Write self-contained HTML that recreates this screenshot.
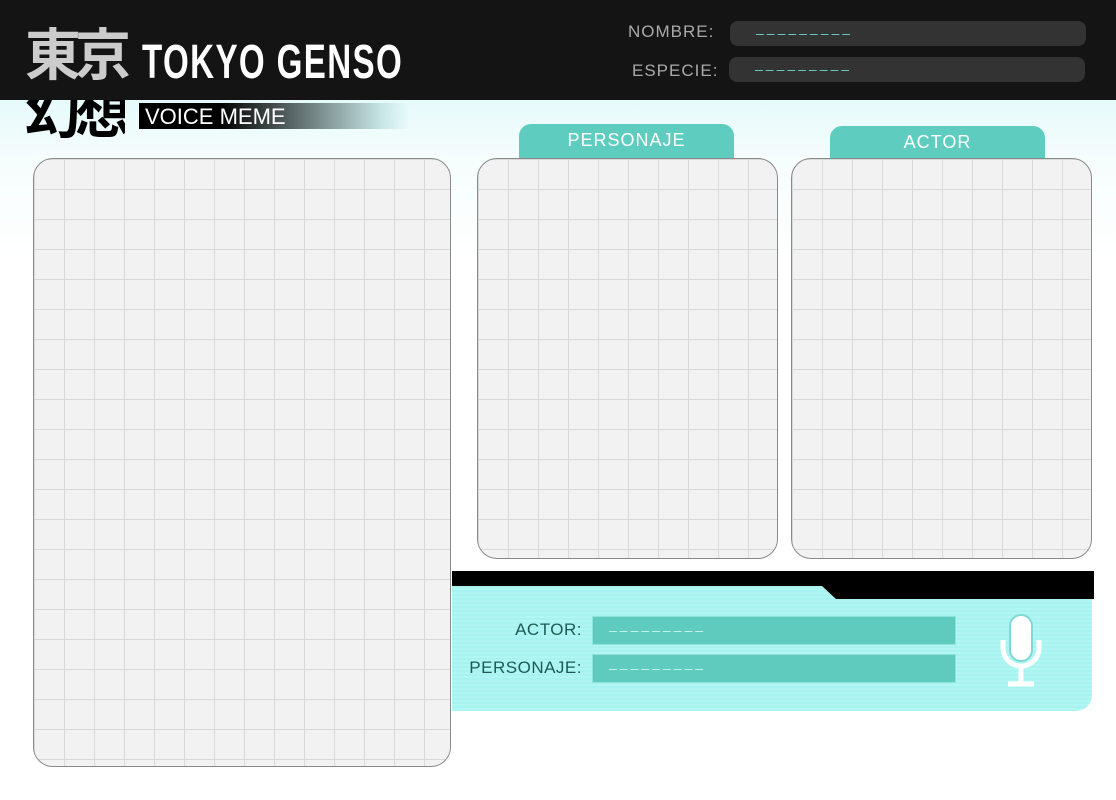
<!DOCTYPE html><html><head><style>
body{margin:0;width:1116px;height:800px;position:relative;overflow:hidden;background:linear-gradient(#e6fafb 100px,#f6fdfd 160px,#fff 260px);font-family:"Liberation Sans","Noto Sans CJK JP",sans-serif}
.a{position:absolute}
.hdr{left:0;top:0;width:1116px;height:100px;background:#141414}
.card{position:absolute;background-color:#f2f2f2;background-image:linear-gradient(90deg,#d9d9d9 1px,transparent 1px),linear-gradient(#d9d9d9 1px,transparent 1px);background-size:30px 30px;background-position:0px 0px;border:1px solid #8a8a8a;border-radius:20px;box-sizing:border-box}
.tab{position:absolute;background:#5ecdc0;border-radius:12px 12px 0 0;color:#fff;font-size:18px;text-align:center;letter-spacing:1px}
.lbl{color:#aaa;font-size:17px;letter-spacing:1px}
.hf{background:#333;border-radius:8px;color:#6ad0c6;font-size:14px;letter-spacing:3px;padding-left:26px;box-sizing:border-box;line-height:25px}
.bf{background:#5fcbbf;border:1px solid #8fe3d9;box-sizing:border-box;color:#c9f3ee;font-size:14px;letter-spacing:3px;padding-left:16px;line-height:26px}
.bl{color:#1d5a55;font-size:17px;text-align:right;width:120px;letter-spacing:.5px}
</style></head><body>
<div class="a hdr"></div>
<div class="a" style="left:25px;top:80px;font-size:56px;line-height:60px;color:#000;font-weight:bold;font-family:'Noto Sans CJK JP',sans-serif;letter-spacing:-6px;clip-path:inset(20px 0 0 0)">幻想</div>
<div class="a" style="left:25px;top:22px;font-size:56px;line-height:60px;color:#ccc;font-weight:bold;font-family:'Noto Sans CJK JP',sans-serif;letter-spacing:-6px">東京</div>
<div class="a" style="left:142px;top:36px;font-size:48px;font-weight:bold;color:#fff;letter-spacing:2px;line-height:54px;transform-origin:0 0;transform:scaleX(0.69);white-space:nowrap">TOKYO GENSO</div>
<div class="a" style="left:139px;top:103px;width:270px;height:26px;background:linear-gradient(90deg,#000 30%,#c8e6e6 90%,transparent)"></div>
<div class="a" style="left:145px;top:103px;color:#fff;font-size:22px;line-height:27px">VOICE MEME</div>
<div class="a lbl" style="left:628px;top:22px">NOMBRE:</div>
<div class="a lbl" style="left:632px;top:61px">ESPECIE:</div>
<div class="a hf" style="left:730px;top:21px;width:356px;height:25px">–––––––––</div>
<div class="a hf" style="left:729px;top:57px;width:356px;height:25px">–––––––––</div>
<div class="card" style="left:33px;top:158px;width:418px;height:609px"></div>
<div class="tab" style="left:519px;top:124px;width:215px;height:34px;line-height:32px">PERSONAJE</div>
<div class="tab" style="left:830px;top:126px;width:215px;height:32px;line-height:32px">ACTOR</div>
<div class="card" style="left:477px;top:158px;width:301px;height:401px"></div>
<div class="card" style="left:791px;top:158px;width:301px;height:401px"></div>
<div class="a" style="left:452px;top:571px;width:642px;height:28px;background:#000"></div>
<div class="a" style="left:452px;top:586px;width:640px;height:125px;background:repeating-linear-gradient(#a8f3ef 0 2px,#b0f6f2 2px 4px);border-radius:0 0 16px 0;clip-path:polygon(0 0,370px 0,384px 13px,100% 13px,100% 100%,0 100%)"></div>
<div class="a bl" style="left:462px;top:620px">ACTOR:</div>
<div class="a bl" style="left:462px;top:658px">PERSONAJE:</div>
<div class="a bf" style="left:592px;top:616px;width:364px;height:29px">–––––––––</div>
<div class="a bf" style="left:592px;top:654px;width:364px;height:29px">–––––––––</div>
<svg class="a" style="left:996px;top:612px" width="56" height="78" viewBox="0 0 56 78"><rect x="14" y="3" width="22" height="46" rx="11" fill="#fff" stroke="#7fd9d6" stroke-width="2"/><path d="M7 28v8a18 18 0 0 0 36 0v-8" fill="none" stroke="#fff" stroke-width="5"/><path d="M25 54v16M12 72h26" stroke="#fff" stroke-width="5"/></svg>
</body></html>
